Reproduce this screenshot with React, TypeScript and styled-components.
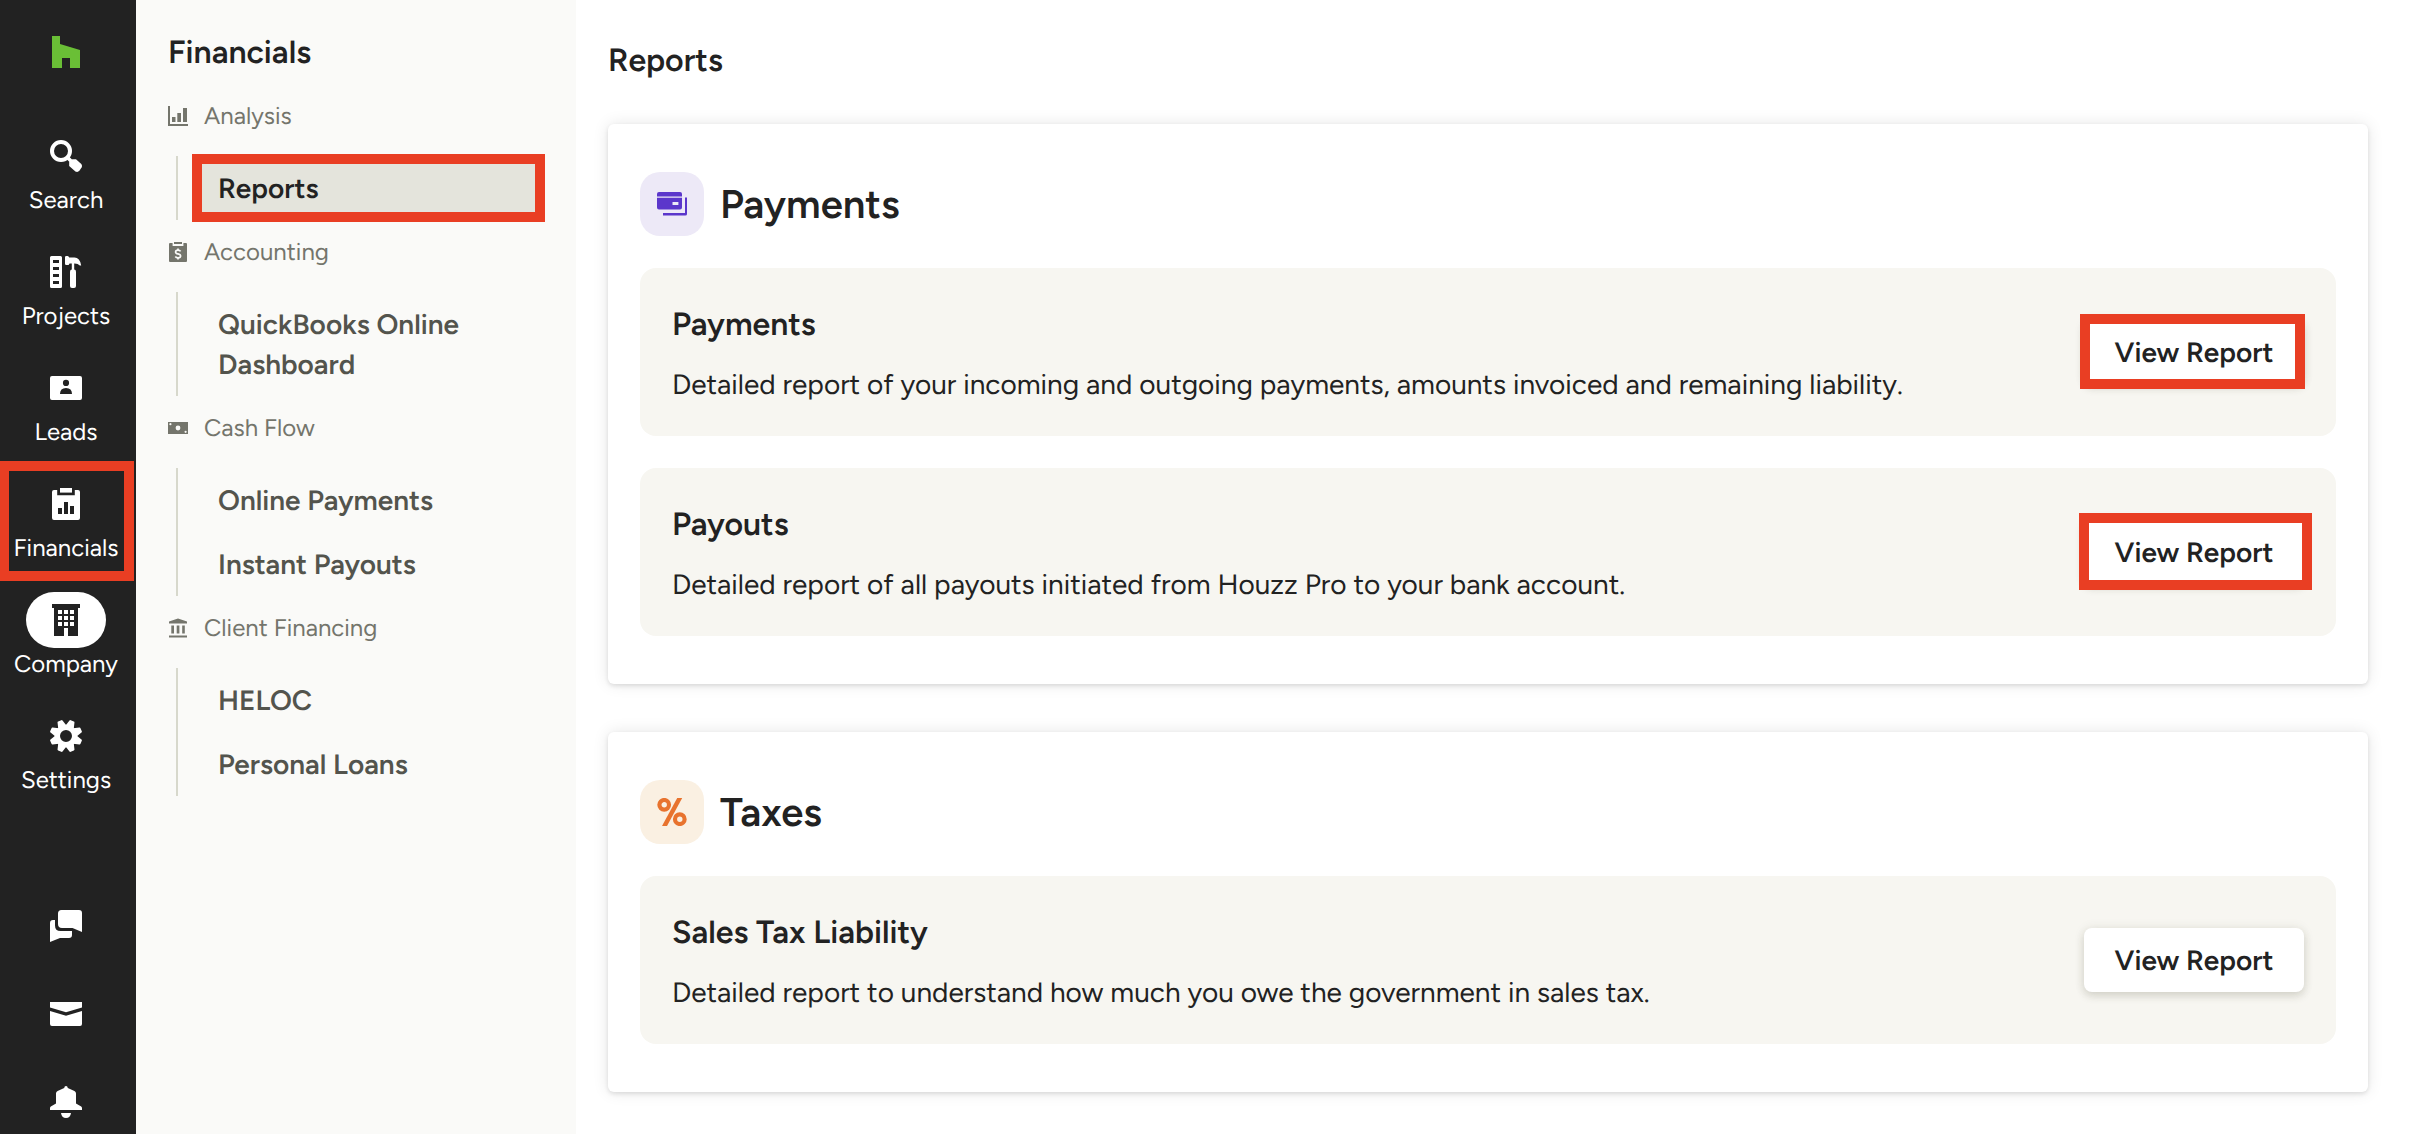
import React from "react";
import styled, { createGlobalStyle } from "styled-components";

const colors = {
  ink: "#222222",
  muted: "#74756c",
  link: "#53544d",
  line: "#d7d8cc",
  panel: "#fafaf8",
  row: "#f7f6f1",
  active: "#e4e4dc",
  marker: "#e93e23",
  green: "#6abf36",
};

const GlobalStyle = createGlobalStyle`
  *, *::before, *::after { box-sizing: border-box; }
  body {
    margin: 0;
    background: #ffffff;
    color: ${colors.ink};
    font-family: Figtree, Lato, "Open Sans", sans-serif;
    text-rendering: geometricPrecision;
  }
  h1, h2, h3, p, ul { margin: 0; padding: 0; }
  ul { list-style: none; }
  a { color: inherit; text-decoration: none; }
  svg { display: block; flex: none; }
`;

const Page = styled.div`
  display: grid;
  grid-template-columns: 136px 440px minmax(0, 1fr);
  min-height: 100vh;
`;

/* ---------- Left rail ---------- */

const Rail = styled.nav`
  display: flex;
  flex-direction: column;
  align-items: stretch;
  padding: 32px 4px 4px 0;
  background: ${colors.ink};
  color: #ffffff;
`;

const LogoLink = styled.a`
  display: flex;
  justify-content: center;
  padding: 4px 0;
  margin-bottom: 56px;
`;

const RailList = styled.ul<{ $gap: number }>`
  display: flex;
  flex-direction: column;
  gap: ${(p) => p.$gap}px;
`;

const RailFooter = styled.div`
  margin-top: auto;
`;

const RailItem = styled.a`
  position: relative;
  display: flex;
  flex-direction: column;
  align-items: center;
  font-size: 24px;
  line-height: 32px;
`;

const RailIcon = styled.span<{ $active?: boolean }>`
  display: flex;
  align-items: center;
  justify-content: center;
  width: 80px;
  height: 56px;
  border-radius: 28px;
  background: ${(p) => (p.$active ? "#ffffff" : "transparent")};
  color: ${(p) => (p.$active ? colors.ink : "#ffffff")};
`;

/* Red call-out frame laid over the thing it points at. */
const Marker = styled.span<{ $inset: string }>`
  position: absolute;
  inset: ${(p) => p.$inset};
  border: 10px solid ${colors.marker};
  pointer-events: none;
`;

/* ---------- Section menu ---------- */

const Panel = styled.aside`
  padding: 32px;
  background: ${colors.panel};
`;

const PanelTitle = styled.h2`
  margin-bottom: 12px;
  font-size: 32px;
  font-weight: 600;
  line-height: 40px;
`;

const GroupHeader = styled.h3`
  display: flex;
  align-items: center;
  gap: 16px;
  padding: 12px 0 20px;
  color: ${colors.muted};
  font-size: 24px;
  font-weight: 400;
  line-height: 40px;
`;

const GroupList = styled.ul`
  margin-left: 8px;
  padding-left: 16px;
  border-left: 2px solid ${colors.line};
`;

const MenuLink = styled.a<{ $active?: boolean }>`
  position: relative;
  display: block;
  padding: 12px 24px;
  background: ${(p) => (p.$active ? colors.active : "transparent")};
  color: ${(p) => (p.$active ? colors.ink : colors.link)};
  font-size: 28px;
  font-weight: 600;
  line-height: 40px;
`;

/* ---------- Main area ---------- */

const Main = styled.main`
  display: flex;
  flex-direction: column;
  padding: 40px 44px 40px 32px;
`;

const PageTitle = styled.h1`
  margin-bottom: 44px;
  font-size: 32px;
  font-weight: 600;
  line-height: 40px;
`;

const Cards = styled.div`
  display: flex;
  flex-direction: column;
  gap: 48px;
`;

const Card = styled.section`
  display: flex;
  flex-direction: column;
  gap: 32px;
  padding: 48px 32px;
  border-radius: 6px;
  background: #ffffff;
  box-shadow: 0 2px 4px rgba(0, 0, 0, 0.1), 0 0 16px rgba(0, 0, 0, 0.1);
`;

const CardHeader = styled.header`
  display: flex;
  align-items: center;
  gap: 16px;
`;

const Tile = styled.span<{ $bg: string; $fg: string }>`
  display: flex;
  align-items: center;
  justify-content: center;
  width: 64px;
  height: 64px;
  border-radius: 20px;
  background: ${(p) => p.$bg};
  color: ${(p) => p.$fg};
`;

const CardTitle = styled.h2`
  font-size: 40px;
  font-weight: 600;
  line-height: 64px;
`;

const Row = styled.div`
  display: flex;
  align-items: center;
  justify-content: space-between;
  gap: 32px;
  padding: 32px;
  border-radius: 16px;
  background: ${colors.row};
`;

const RowText = styled.div`
  display: flex;
  flex-direction: column;
  gap: 16px;
  min-width: 0;
`;

const RowTitle = styled.h3`
  font-size: 32px;
  font-weight: 600;
  line-height: 48px;
`;

const RowDescription = styled.p`
  font-size: 28px;
  line-height: 40px;
`;

const ReportButton = styled.button`
  position: relative;
  flex: none;
  min-width: 220px;
  padding: 12px 28px;
  border: 0;
  border-radius: 8px;
  background: #ffffff;
  box-shadow: 0 4px 8px rgba(60, 60, 40, 0.16), 0 0 12px rgba(60, 60, 40, 0.08);
  color: ${colors.ink};
  font: inherit;
  font-size: 28px;
  font-weight: 600;
  line-height: 40px;
  text-rendering: inherit;
  white-space: nowrap;
  cursor: pointer;
`;

/* ---------- Icons ---------- */

const Logo = () => (
  <svg width="28" height="32" viewBox="0 0 28 32" fill={colors.green} aria-hidden="true">
    <path d="M0 0H8V8L28 14V32H18V22H10V32H0Z" />
  </svg>
);

const SearchIcon = () => (
  <svg width="32" height="32" viewBox="0 0 32 32" fill="none" stroke="currentColor" aria-hidden="true">
    <circle cx="11" cy="11" r="9" strokeWidth="4" />
    <path d="M17 17L22 22" strokeWidth="3.6" />
    <path d="M22.4 19.2H26L31 23.8Q32.6 25.4 31.6 27.4L29.4 30.8Q27.6 32.6 25.4 31.4L19.2 26V22.2Z" fill="currentColor" stroke="none" />
  </svg>
);

const ProjectsIcon = () => (
  <svg width="32" height="32" viewBox="0 0 32 32" fill="currentColor" aria-hidden="true">
    <path
      fillRule="evenodd"
      d="M1.5 0H10.5Q12 0 12 1.5V30.5Q12 32 10.5 32H1.5Q0 32 0 30.5V1.5Q0 0 1.5 0ZM3 4V7H9V4ZM3 11V14H9V11ZM3 18V21H9V18ZM3 25V28H9V25Z"
    />
    <path d="M16.3 0H17.6Q18.8 0 19.2 1.6H24.5Q29.8 1.8 31.2 9.4L29.8 9.6Q27.8 7.4 24.2 7.6V14H21.8V7.6H19.6L18.6 9H16.3Q15 9 15 7.7V1.3Q15 0 16.3 0Z" />
    <path d="M22 13.5H24Q26 13.5 26 15.5V30Q26 32 24 32H22Q20 32 20 30V15.5Q20 13.5 22 13.5Z" />
  </svg>
);

const LeadsIcon = () => (
  <svg width="32" height="24" viewBox="0 0 32 24" fill="currentColor" aria-hidden="true">
    <path
      fillRule="evenodd"
      d="M2 0H30Q32 0 32 2V22Q32 24 30 24H2Q0 24 0 22V2Q0 0 2 0ZM16 3.8A3.1 3.1 0 1 0 16 10A3.1 3.1 0 1 0 16 3.8ZM10 18H22Q22 12 16 12Q10 12 10 18Z"
    />
  </svg>
);

const FinancialsIcon = () => (
  <svg width="32" height="32" viewBox="0 0 32 32" fill="currentColor" aria-hidden="true">
    <path d="M10 0H22V4.6H10Z" />
    <path
      fillRule="evenodd"
      d="M4 2H7.2V7.2H24.8V2H28Q30 2 30 4V30Q30 32 28 32H4Q2 32 2 30V4Q2 2 4 2ZM8 20V26H12V20ZM14 14V26H18V14ZM20 18V26H24V18Z"
    />
  </svg>
);

const CompanyIcon = () => (
  <svg width="32" height="32" viewBox="0 0 32 32" fill="currentColor" aria-hidden="true">
    <path
      fillRule="evenodd"
      d="M2 0H30V4H28V32H18V24H14V32H4V4H2ZM8 6V10H12V6ZM14 6V10H18V6ZM20 6V10H24V6ZM8 12V16H12V12ZM14 12V16H18V12ZM20 12V16H24V12ZM8 18V22H12V18ZM14 18V22H18V18ZM20 18V22H24V18Z"
    />
  </svg>
);

const SettingsIcon = () => (
  <svg width="32" height="32" viewBox="-16 -16 32 32" fill="currentColor" aria-hidden="true">
    <circle r="8.6" fill="none" stroke="currentColor" strokeWidth="5.2" />
    {[0, 1, 2, 3, 4, 5, 6, 7].map((n) => (
      <path
        key={n}
        transform={`rotate(${22.5 + n * 45})`}
        d="M-4.4 -9.6L-2.7 -15.6Q-2.5 -16.4 -1.7 -16.4H1.7Q2.5 -16.4 2.7 -15.6L4.4 -9.6Z"
      />
    ))}
  </svg>
);

const ChatIcon = () => (
  <svg width="32" height="32" viewBox="0 0 32 32" fill="currentColor" aria-hidden="true">
    <path d="M11.5 0H29Q32 0 32 3V22L22.5 18H12Q8 18 8 14V3.5Q8 0 11.5 0Z" />
    <path d="M3 10H5V15.5Q5 21 10.5 21H22V25Q22 28 19 28H10L0 32V13Q0 10 3 10Z" />
  </svg>
);

const MailIcon = () => (
  <svg width="32" height="24" viewBox="0 0 32 24" fill="currentColor" aria-hidden="true">
    <path d="M0 0H32V5.6L16 10.2L0 5.6Z" />
    <path d="M0 9L16 13.8L32 9V22Q32 24 30 24H2Q0 24 0 22Z" />
  </svg>
);

const BellIcon = () => (
  <svg width="32" height="32" viewBox="0 0 32 32" fill="currentColor" aria-hidden="true">
    <path d="M14.2 2Q14.4 0 16 0Q17.6 0 17.8 2L24.4 5Q26 5.8 26 7.6V17.5L31.2 20.4Q32 20.9 32 22V24H0V22Q0 20.9 0.8 20.4L6 17.5V7.6Q6 5.8 7.6 5Z" />
    <path d="M11 27H21Q20.4 32 16 32Q11.6 32 11 27Z" />
  </svg>
);

const AnalysisIcon = () => (
  <svg width="20" height="20" viewBox="0 0 20 20" fill="currentColor" aria-hidden="true">
    <path d="M0 0H2V18H20V20H0ZM4 11H7.5V16H4ZM9.3 7H13V16H9.3ZM15 2H19V16H15Z" />
  </svg>
);

const AccountingIcon = () => (
  <svg width="20" height="20" viewBox="0 0 20 20" fill="currentColor" aria-hidden="true">
    <path d="M6 0H14V2H6Z" />
    <path d="M2 1H4.6V4H15.4V1H18Q19 1 19 2V19Q19 20 18 20H2Q1 20 1 19V2Q1 1 2 1Z" />
    <g fill="none" stroke={colors.panel} strokeWidth="1.7">
      <path d="M12.6 9.4Q11.8 8.2 10 8.2Q7.6 8.2 7.6 9.9Q7.6 11.4 10 11.9Q12.6 12.4 12.6 14.1Q12.6 15.8 10 15.8Q8.2 15.8 7.3 14.5" />
      <path d="M10 6.6V8.6M10 15.4V17.4" />
    </g>
  </svg>
);

const CashIcon = () => (
  <svg width="20" height="20" viewBox="0 0 20 20" fill="currentColor" aria-hidden="true">
    <path d="M0 4H20V16H0Z" />
    <g fill={colors.panel}>
      <circle cx="10" cy="10" r="2.4" />
      <circle cx="2.4" cy="6.2" r="1.1" />
      <circle cx="17.6" cy="13.8" r="1.1" />
    </g>
  </svg>
);

const BankIcon = () => (
  <svg width="20" height="20" viewBox="0 0 20 20" fill="currentColor" aria-hidden="true">
    <path d="M10 0.5L19 3.6V5.6H1V3.6ZM3.3 7.5H6V15.5H3.3ZM8.7 7.5H11.4V15.5H8.7ZM14.2 7.5H16.8V15.5H14.2ZM1 17.5H19V19.5H1Z" />
  </svg>
);

const CardsIcon = () => (
  <svg width="30" height="24" viewBox="0 0 30 24" fill="currentColor" aria-hidden="true">
    <path
      fillRule="evenodd"
      d="M2 0H23Q25 0 25 2V4.4H0V2Q0 0 2 0ZM0 5.8H25V15.6Q25 17.6 23 17.6H2Q0 17.6 0 15.6ZM15.5 10V13H21.4V10Z"
    />
    <path d="M28 5.6H30V22Q30 23.6 28.4 23.6H6V21H28Z" />
  </svg>
);

const PercentIcon = () => (
  <svg width="30" height="28" viewBox="0 0 30 28" fill="none" stroke="currentColor" strokeWidth="4.2" aria-hidden="true">
    <circle cx="7.2" cy="6.8" r="4.8" />
    <circle cx="22.8" cy="21.2" r="4.8" />
    <path d="M20.2 0H25.2L10 28H5Z" fill="currentColor" stroke="none" />
  </svg>
);

/* ---------- Data ---------- */

const railItems = [
  { label: "Search", icon: <SearchIcon /> },
  { label: "Projects", icon: <ProjectsIcon /> },
  { label: "Leads", icon: <LeadsIcon /> },
  { label: "Financials", icon: <FinancialsIcon />, marker: "-15px -2px -17px -1px" },
  { label: "Company", icon: <CompanyIcon />, active: true },
  { label: "Settings", icon: <SettingsIcon /> },
];

const railTools = [
  { label: "Messages", icon: <ChatIcon /> },
  { label: "Mail", icon: <MailIcon /> },
  { label: "Notifications", icon: <BellIcon /> },
];

const menuGroups = [
  { title: "Analysis", icon: <AnalysisIcon />, links: ["Reports"] },
  { title: "Accounting", icon: <AccountingIcon />, links: ["QuickBooks Online Dashboard"] },
  { title: "Cash Flow", icon: <CashIcon />, links: ["Online Payments", "Instant Payouts"] },
  { title: "Client Financing", icon: <BankIcon />, links: ["HELOC", "Personal Loans"] },
];

const reportCards = [
  {
    title: "Payments",
    icon: <CardsIcon />,
    bg: "#ede9f7",
    fg: "#5b36cb",
    rows: [
      {
        title: "Payments",
        text: "Detailed report of your incoming and outgoing payments, amounts invoiced and remaining liability.",
        marker: "-6px -1px -5px -4px",
      },
      {
        title: "Payouts",
        text: "Detailed report of all payouts initiated from Houzz Pro to your bank account.",
        marker: "-7px -8px -6px -5px",
      },
    ],
  },
  {
    title: "Taxes",
    icon: <PercentIcon />,
    bg: "#faf0e2",
    fg: "#e8732e",
    rows: [
      {
        title: "Sales Tax Liability",
        text: "Detailed report to understand how much you owe the government in sales tax.",
        marker: "",
      },
    ],
  },
];

export default function App() {
  return (
    <>
      <GlobalStyle />
      <Page>
        <Rail aria-label="Main">
          <LogoLink href="#" aria-label="Home">
            <Logo />
          </LogoLink>
          <RailList $gap={28}>
            {railItems.map((item) => (
              <li key={item.label}>
                <RailItem href="#">
                  <RailIcon $active={item.active}>{item.icon}</RailIcon>
                  {item.label}
                  {item.marker && <Marker $inset={item.marker} />}
                </RailItem>
              </li>
            ))}
          </RailList>
          <RailFooter>
            <RailList $gap={32}>
              {railTools.map((item) => (
                <li key={item.label}>
                  <RailItem href="#" aria-label={item.label}>
                    <RailIcon>{item.icon}</RailIcon>
                  </RailItem>
                </li>
              ))}
            </RailList>
          </RailFooter>
        </Rail>

        <Panel>
          <PanelTitle>Financials</PanelTitle>
          {menuGroups.map((group) => (
            <section key={group.title}>
              <GroupHeader>
                {group.icon}
                {group.title}
              </GroupHeader>
              <GroupList>
                {group.links.map((link) => (
                  <li key={link}>
                    <MenuLink href="#" $active={link === "Reports"}>
                      {link}
                      {link === "Reports" && <Marker $inset="-2px -1px -2px -2px" />}
                    </MenuLink>
                  </li>
                ))}
              </GroupList>
            </section>
          ))}
        </Panel>

        <Main>
          <PageTitle>Reports</PageTitle>
          <Cards>
            {reportCards.map((card) => (
              <Card key={card.title}>
                <CardHeader>
                  <Tile $bg={card.bg} $fg={card.fg}>
                    {card.icon}
                  </Tile>
                  <CardTitle>{card.title}</CardTitle>
                </CardHeader>
                {card.rows.map((row) => (
                  <Row key={row.title}>
                    <RowText>
                      <RowTitle>{row.title}</RowTitle>
                      <RowDescription>{row.text}</RowDescription>
                    </RowText>
                    <ReportButton type="button">
                      View Report
                      {row.marker && <Marker $inset={row.marker} />}
                    </ReportButton>
                  </Row>
                ))}
              </Card>
            ))}
          </Cards>
        </Main>
      </Page>
    </>
  );
}
